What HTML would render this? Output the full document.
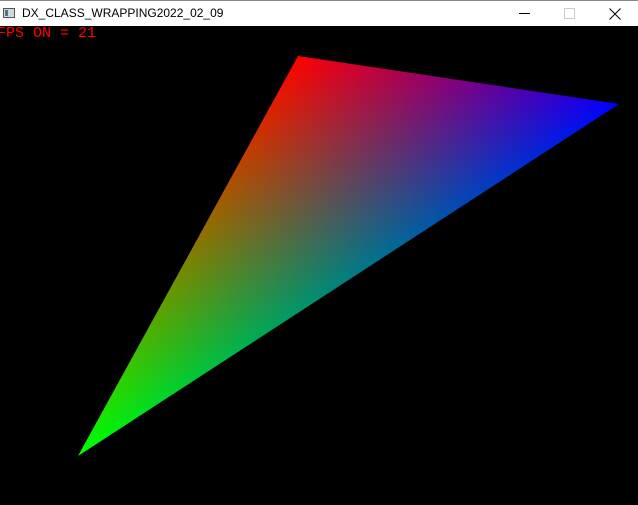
<!DOCTYPE html>
<html><head><meta charset="utf-8"><style>
html,body{margin:0;padding:0;width:638px;height:505px;overflow:hidden;background:#000}
.tb{position:absolute;left:0;top:0;width:638px;height:26px;background:#fff;border-top:1px solid #888;box-sizing:border-box}
.ic{position:absolute;left:3px;top:7px;width:12px;height:10px;border:1px solid #555;background:#cfd8dc;box-sizing:border-box}
.ic:after{content:"";position:absolute;left:1px;top:1px;width:3px;height:6px;background:#4a7a8a}
.tt{position:absolute;left:22px;top:5px;font:12px "Liberation Sans",sans-serif;color:#000}
.fps{position:absolute;left:-3px;top:25px;font:15px "Liberation Mono",monospace;color:#f00}
svg{position:absolute;left:0;top:0}
</style></head><body>
<svg width="638" height="505" viewBox="0 0 638 505">
<defs>
<linearGradient id="r" gradientUnits="userSpaceOnUse" x1="298" y1="56" x2="415.4" y2="236.5"><stop offset="0" stop-color="#f00"/><stop offset="1" stop-color="#000"/></linearGradient>
<linearGradient id="g" gradientUnits="userSpaceOnUse" x1="78" y1="456" x2="141.3" y2="32.6"><stop offset="0" stop-color="#0f0"/><stop offset="1" stop-color="#000"/></linearGradient>
<linearGradient id="b" gradientUnits="userSpaceOnUse" x1="619" y1="104" x2="352.3" y2="-42.7"><stop offset="0" stop-color="#00f"/><stop offset="1" stop-color="#000"/></linearGradient>
</defs>
<polygon points="298,56 619,104 78,456" fill="url(#r)"/>
<polygon points="298,56 619,104 78,456" fill="url(#g)" style="mix-blend-mode:screen"/>
<polygon points="298,56 619,104 78,456" fill="url(#b)" style="mix-blend-mode:screen"/>
</svg>
<div class="tb">
<div class="ic"></div>
<div class="tt">DX_CLASS_WRAPPING2022_02_09</div>
<div style="position:absolute;left:519px;top:12px;width:11px;height:1px;background:#000"></div>
<div style="position:absolute;left:564px;top:7px;width:9px;height:9px;border:1px solid #ccc"></div>
<svg width="12" height="12" style="left:609px;top:7px;position:absolute"><path d="M0.5 0.5L11.5 11.5M11.5 0.5L0.5 11.5" stroke="#000" stroke-width="1"/></svg>
</div>
<div class="fps">FPS ON = 21</div>
</body></html>
